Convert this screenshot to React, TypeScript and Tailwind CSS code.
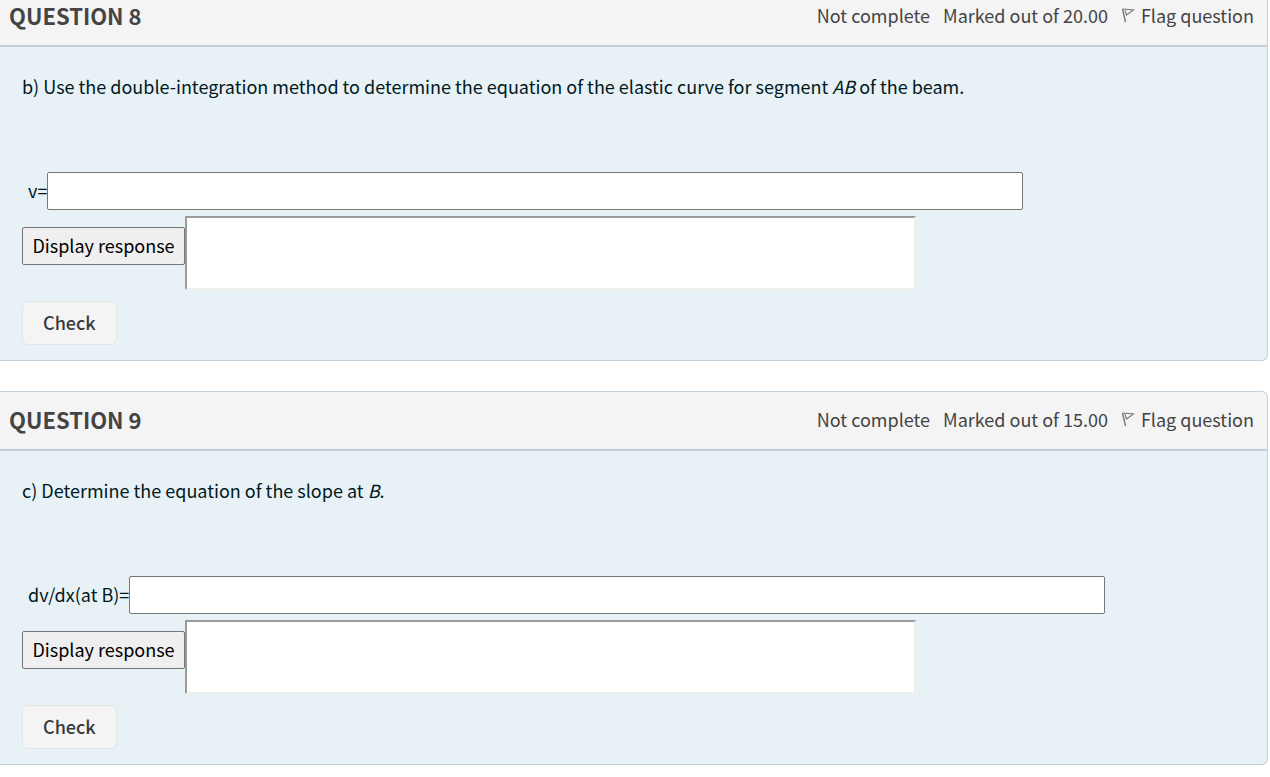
import type { ReactNode } from "react";

type QuestionProps = {
  number: number;
  marks: string;
  answerLabel: string;
  children: ReactNode;
};

function FlagIcon() {
  return (
    <svg width="14" height="16" viewBox="0 0 14 16" fill="none" stroke="#777" aria-hidden="true">
      <path d="M1.5 2 L4.5 15" strokeWidth="1.4" />
      <path d="M1.5 2 L12.5 3 L5.5 8 L4 2.8" strokeWidth="1.1" />
    </svg>
  );
}

function Question({ number, marks, answerLabel, children }: QuestionProps) {
  const answerId = `answer-${number}`;

  return (
    <section className="rounded-r-md border border-l-0 border-[#c2d1d9] bg-[#e7f1f6]">
      <header className="flex h-[59px] items-center justify-between rounded-tr-md border-b-2 border-[#c0cfd9] bg-[#f4f4f4] pr-[13px] pb-1 pl-[9px] text-[#444]">
        <h2 className="text-[22px] leading-[30px] font-bold">QUESTION {number}</h2>
        <div className="flex items-center text-[18px] leading-[30px]">
          <span className="mr-[13px]">Not complete</span>
          <span className="mr-[13px]">Marked out of {marks}</span>
          <a href="#flag" className="flex items-center gap-[6px]">
            <FlagIcon />
            Flag question
          </a>
        </div>
      </header>

      <form className="pt-6 pr-4 pb-[15px] pl-[22px] text-[18px] leading-[30px] text-[#001a1e]" onSubmit={(e) => e.preventDefault()}>
        <p className="mb-[71px]">{children}</p>
        <div className="flex items-center pl-[6px]">
          <label htmlFor={answerId} className="shrink-0 pb-[2px]">{answerLabel}</label>
          <input id={answerId} type="text" className="h-[38px] w-[976px] min-w-0 rounded-xs border border-[#767676] bg-white px-1" />
        </div>
        <div className="mt-[6px] flex items-start">
          <button type="button" className="mt-[11px] h-[38px] w-[163px] shrink-0 rounded-xs border border-[#767676] bg-[#efefef] pb-[2px] leading-[30px] text-black">
            Display response
          </button>
          <output htmlFor={answerId} className="block h-[74px] w-[731px] min-w-0 border-2 border-t-[#9a9a9a] border-r-[#eeeeee] border-b-[#eeeeee] border-l-[#9a9a9a] bg-white" />
        </div>
        <button type="submit" className="mt-[11px] h-[44px] rounded-md border border-[#e0e6e9] bg-[#f4f4f4] px-5 pb-[2px] font-medium text-[#373a3c]">
          Check
        </button>
      </form>
    </section>
  );
}

export default function App() {
  return (
    <main className="-mt-[13px] mr-[2px] flex flex-col gap-[30px] bg-white font-['Noto_Sans_CJK_SC',sans-serif]">
      <Question number={8} marks="20.00" answerLabel="v=">
        b) Use the double-integration method to determine the equation of the elastic curve for segment <em>AB</em> of the beam.
      </Question>
      <Question number={9} marks="15.00" answerLabel="dv/dx(at B)=">
        c) Determine the equation of the slope at <em>B</em>.
      </Question>
    </main>
  );
}
